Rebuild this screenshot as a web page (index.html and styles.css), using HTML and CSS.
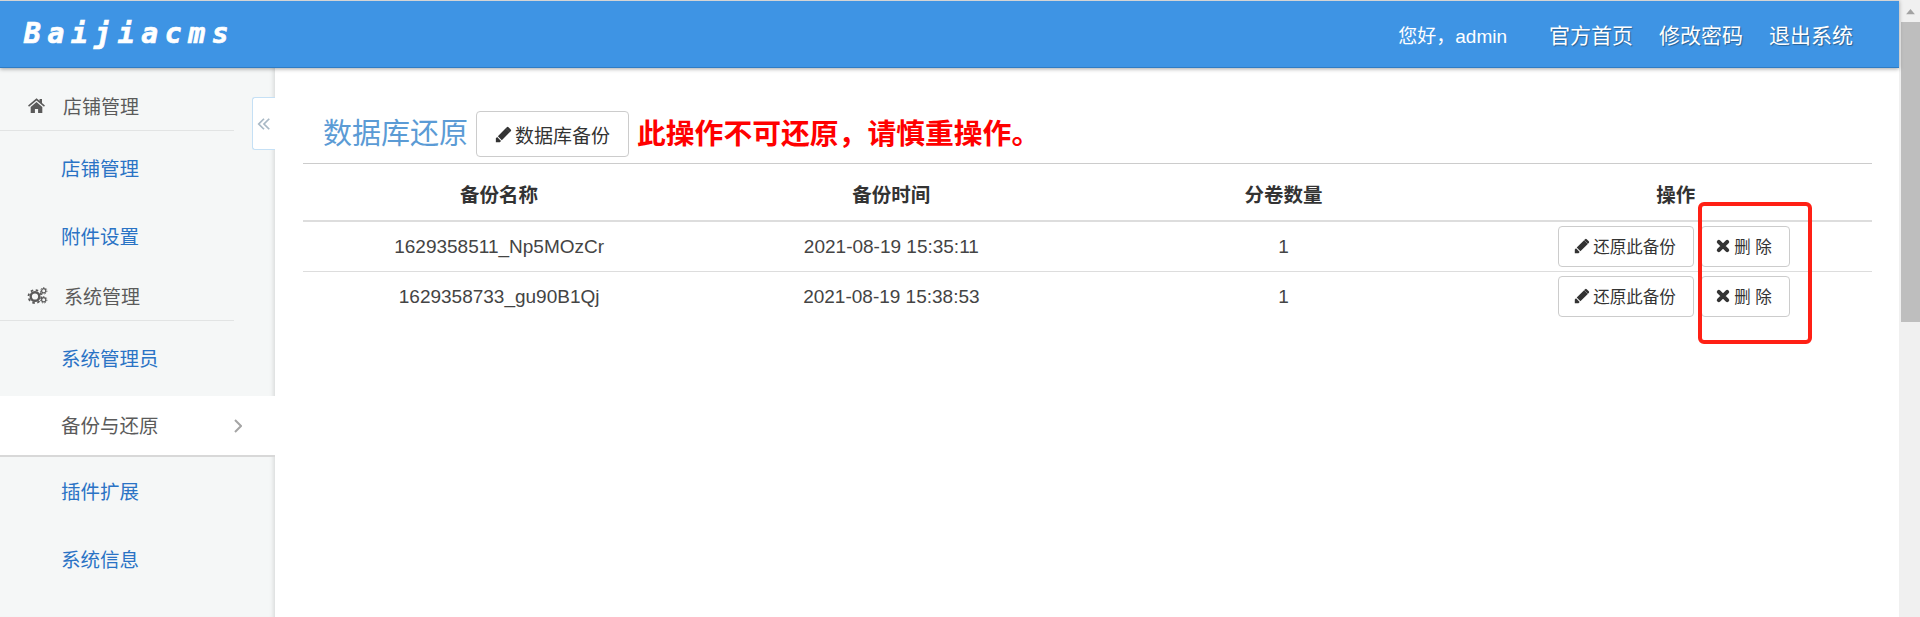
FILE: index.html
```html
<!DOCTYPE html>
<html lang="zh">
<head>
<meta charset="utf-8">
<title>Baijiacms</title>
<link rel="stylesheet" href="styles.css">
</head>
<body>
<svg class="defs" width="0" height="0" aria-hidden="true">
  <symbol id="i-pencil" viewBox="0 0 16 16"><path d="M.8 15.200v-3.700l1.200-1.200 3.700 3.700-1.200 1.200zM2.700 9.600l7.400-7.400 3.700 3.700-7.400 7.400zM11.100 1.200a1.100 1.100 0 0 1 1.600 0l2.100 2.100a1.100 1.100 0 0 1 0 1.600l-.9.900-3.700-3.700z"/></symbol>
  <symbol id="i-times" viewBox="0 0 16 16"><path d="M3.800 3.800 12.200 12.200M12.200 3.800 3.800 12.200" fill="none" stroke="#333" stroke-width="4" stroke-linecap="round"/></symbol>
</svg>
<div class="window">
  <div class="app">
    <header class="topbar">
      <div class="logo">Baijiacms</div>
      <nav class="topnav">
        <span class="hello">您好，admin</span>
        <a class="toplink">官方首页</a>
        <a class="toplink">修改密码</a>
        <a class="toplink">退出系统</a>
      </nav>
    </header>
    <div class="body-row">
      <aside class="sidebar">
        <div class="group">
          <svg class="group-icon" viewBox="0 0 18 16"><path d="M9 1.200 1 8l.9 1.100L9 3.200l7.100 5.900L17 8l-2.800-2.400V1.800h-2.300v1.800zM3.500 9.400V15h4v-3.800h3V15h4V9.400L9 4.800z"/></svg>
          <span>店铺管理</span>
        </div>
        <a class="item item-first">店铺管理</a>
        <a class="item">附件设置</a>
        <div class="group group-second">
          <svg class="group-icon gear-icon" viewBox="0 0 20 17"><circle cx="7.500" cy="9.500" r="4.300" stroke-width="2.400"/><circle cx="7.500" cy="9.500" r="6.500" stroke-width="1.800" stroke-dasharray="2.500 2.600"/><circle cx="16.200" cy="3.800" r="2.100" stroke-width="1.200"/><circle cx="16.200" cy="3.800" r="3.200" stroke-width="1" stroke-dasharray="1.400 1.400"/><circle cx="16.200" cy="12.800" r="2.100" stroke-width="1.200"/><circle cx="16.200" cy="12.800" r="3.200" stroke-width="1" stroke-dasharray="1.400 1.400"/></svg>
          <span>系统管理</span>
        </div>
        <a class="item item-tight">系统管理员</a>
        <a class="item item-active">备份与还原
          <svg class="item-arrow" viewBox="0 0 8 14"><path d="M1 1l6 6-6 6" fill="none" stroke="currentColor" stroke-width="2"/></svg>
        </a>
        <a class="item">插件扩展</a>
        <a class="item">系统信息</a>
        <button class="collapse" type="button" aria-label="收起">
          <svg viewBox="0 0 12 12"><path d="M6 1.500 1.500 6 6 10.500M10.500 1.500 6 6l4.500 4.500" fill="none" stroke="currentColor" stroke-width="1.500"/></svg>
        </button>
      </aside>
      <main class="content">
        <div class="heading">
          <h3 class="title">数据库还原</h3>
          <a class="btn btn-large"><svg class="btn-icon"><use href="#i-pencil"/></svg>数据库备份</a>
          <strong class="warning">此操作不可还原，请慎重操作。</strong>
        </div>
        <table class="table">
          <thead>
            <tr><th>备份名称</th><th>备份时间</th><th>分卷数量</th><th>操作</th></tr>
          </thead>
          <tbody>
            <tr>
              <td class="cell">1629358511_Np5MOzCr</td><td class="cell">2021-08-19 15:35:11</td><td class="cell">1</td>
              <td><div class="actions"><a class="btn btn-restore"><svg class="btn-icon"><use href="#i-pencil"/></svg>还原此备份</a><a class="btn btn-delete"><svg class="btn-icon"><use href="#i-times"/></svg>删 除</a></div></td>
            </tr>
            <tr>
              <td class="cell">1629358733_gu90B1Qj</td><td class="cell">2021-08-19 15:38:53</td><td class="cell">1</td>
              <td><div class="actions"><a class="btn btn-restore"><svg class="btn-icon"><use href="#i-pencil"/></svg>还原此备份</a><a class="btn btn-delete"><svg class="btn-icon"><use href="#i-times"/></svg>删 除</a></div></td>
            </tr>
          </tbody>
        </table>
        <div class="annotation"></div>
      </main>
    </div>
  </div>
  <div class="scrollbar">
    <div class="scroll-btn"><svg viewBox="0 0 12 8"><path d="M6 1 11 7H1z"/></svg></div>
    <div class="scroll-thumb"></div>
  </div>
</div>
</body>
</html>
```

FILE: styles.css
```css
* { box-sizing: border-box; }
html, body { margin: 0; height: 617px; overflow: hidden; background: #fff; }
body {
  font-family: "Liberation Sans", "Noto Sans CJK SC", sans-serif;
  font-size: 18px;
  color: #333;
}
.defs { position: absolute; }
.window { display: flex; height: 617px; }
.app { flex: 1; min-width: 0; display: flex; flex-direction: column; }

.topbar {
  flex: none;
  height: 68px;
  border-top: 1px solid #d4d4d4;
  border-bottom: 1px solid #2f7cc4;
  background: #3e94e4;
  box-shadow: 0 1px 4px rgba(0,0,0,.35);
  display: flex;
  align-items: center;
  justify-content: space-between;
  padding: 0 46px 0 24px;
  color: #fff;
  position: relative;
  z-index: 2;
}
.logo {
  font-family: "DejaVu Sans Mono", monospace;
  font-weight: 700;
  font-style: italic;
  font-size: 28px;
  letter-spacing: 6.600px;
  line-height: 30px;
  -webkit-text-stroke: .7px #fff;
}
.topnav { display: flex; align-items: center; }
.hello { font-size: 19px; margin-right: 42px; }
.toplink { font-size: 21px; margin-left: 26px; text-shadow: 1px 1px 1px rgba(0,0,0,.35); }
.hello + .toplink { margin-left: 0; }

.body-row { flex: 1; display: flex; min-height: 0; }
.sidebar {
  flex: none;
  width: 275px;
  background: #f5f7f7;
  box-shadow: inset -5px 0 5px -4px rgba(0,0,0,.14);
  position: relative;
  padding-top: 12px;
}
.group {
  height: 51px;
  width: 234px;
  display: flex;
  align-items: center;
  padding-left: 27px;
  border-bottom: 1px solid #e2e4e4;
  color: #5b5b5b;
  font-size: 19px;
}
.group span { margin-left: 17px; }
.group-icon { width: 19px; height: 17px; fill: #5a5a5a; flex: none; }
.group-second span { margin-left: 16px; }
.group-second .gear-icon { width: 21px; fill: none; stroke: #5a5a5a; }
.item {
  display: flex;
  align-items: center;
  height: 68px;
  padding: 0 0 2px 61px;
  color: #2a73c5;
  font-size: 19.500px;
}
.item-first { margin-top: 3px; }
.item-tight { height: 75px; }
.item-active {
  height: 61px;
  width: 275px;
  background: #fff;
  border-bottom: 2px solid #d8d8d8;
  color: #5b5b5b;
  justify-content: space-between;
  padding: 0 33px 2px 61px;
}
.item-arrow { width: 8px; height: 14px; color: #a5a5a5; margin-top: 2px; }
.collapse {
  position: absolute;
  top: 29px;
  right: 0;
  width: 23px;
  height: 53px;
  padding: 0;
  background: #fff;
  border: 1px solid #c5e0f5;
  border-right: 0;
  border-radius: 3px 0 0 3px;
  color: #a9b9c6;
  display: flex;
  align-items: center;
  justify-content: center;
}
.collapse svg { width: 14px; height: 14px; }

.content { flex: 1; min-width: 0; position: relative; padding: 43px 27px 0 28px; }
.heading {
  height: 53px;
  display: flex;
  align-items: flex-start;
  padding-left: 20px;
  border-bottom: 1px solid #ccc;
}
.title {
  margin: 0 8px 0 0;
  font-size: 29px;
  font-weight: 400;
  line-height: 46px;
  color: #5b9bd5;
}
.warning {
  margin-left: 8px;
  font-size: 28.800px;
  line-height: 47px;
  color: #f00;
}
.btn {
  display: inline-flex;
  align-items: center;
  justify-content: center;
  border: 1px solid #ccc;
  border-radius: 4px;
  background: #fff;
  color: #333;
  white-space: nowrap;
}
.btn-large { width: 153px; height: 46px; font-size: 19px; }
.btn-restore { width: 136px; height: 41px; font-size: 16.500px; padding-right: 2px; }
.btn-delete { width: 89px; height: 41px; font-size: 16.500px; padding-right: 4px; }
.btn-icon { width: 16px; height: 16px; fill: #333; margin-right: 3px; flex: none; }
.btn-large .btn-icon { width: 17px; height: 17px; }

.table { width: 100%; border-collapse: collapse; table-layout: fixed; }
.table th, .table td { padding: 0; text-align: center; vertical-align: middle; }
.table th {
  height: 57px;
  padding-top: 3px;
  font-size: 19.500px;
  font-weight: 700;
  border-bottom: 2px solid #ddd;
}
.table td { height: 50px; font-size: 19px; color: #444; border-bottom: 1px solid #ddd; }
.table td.cell { padding-top: 2px; }
.table tr:last-child td { border-bottom: 0; }
.actions { display: flex; justify-content: flex-end; gap: 7px; padding-right: 82px; }

.annotation {
  position: absolute;
  left: 1423px;
  top: 134px;
  width: 114px;
  height: 142px;
  border: 4px solid #ff2015;
  border-radius: 6px;
  pointer-events: none;
}

.scrollbar { flex: none; width: 21px; background: #f0f0f0; padding-left: 2px; display: flex; flex-direction: column; }
.scroll-btn { height: 22px; display: flex; align-items: center; justify-content: center; }
.scroll-btn svg { width: 11px; height: 7px; fill: #a3a3a3; }
.scroll-thumb { height: 300px; background: #bebebe; }
```
